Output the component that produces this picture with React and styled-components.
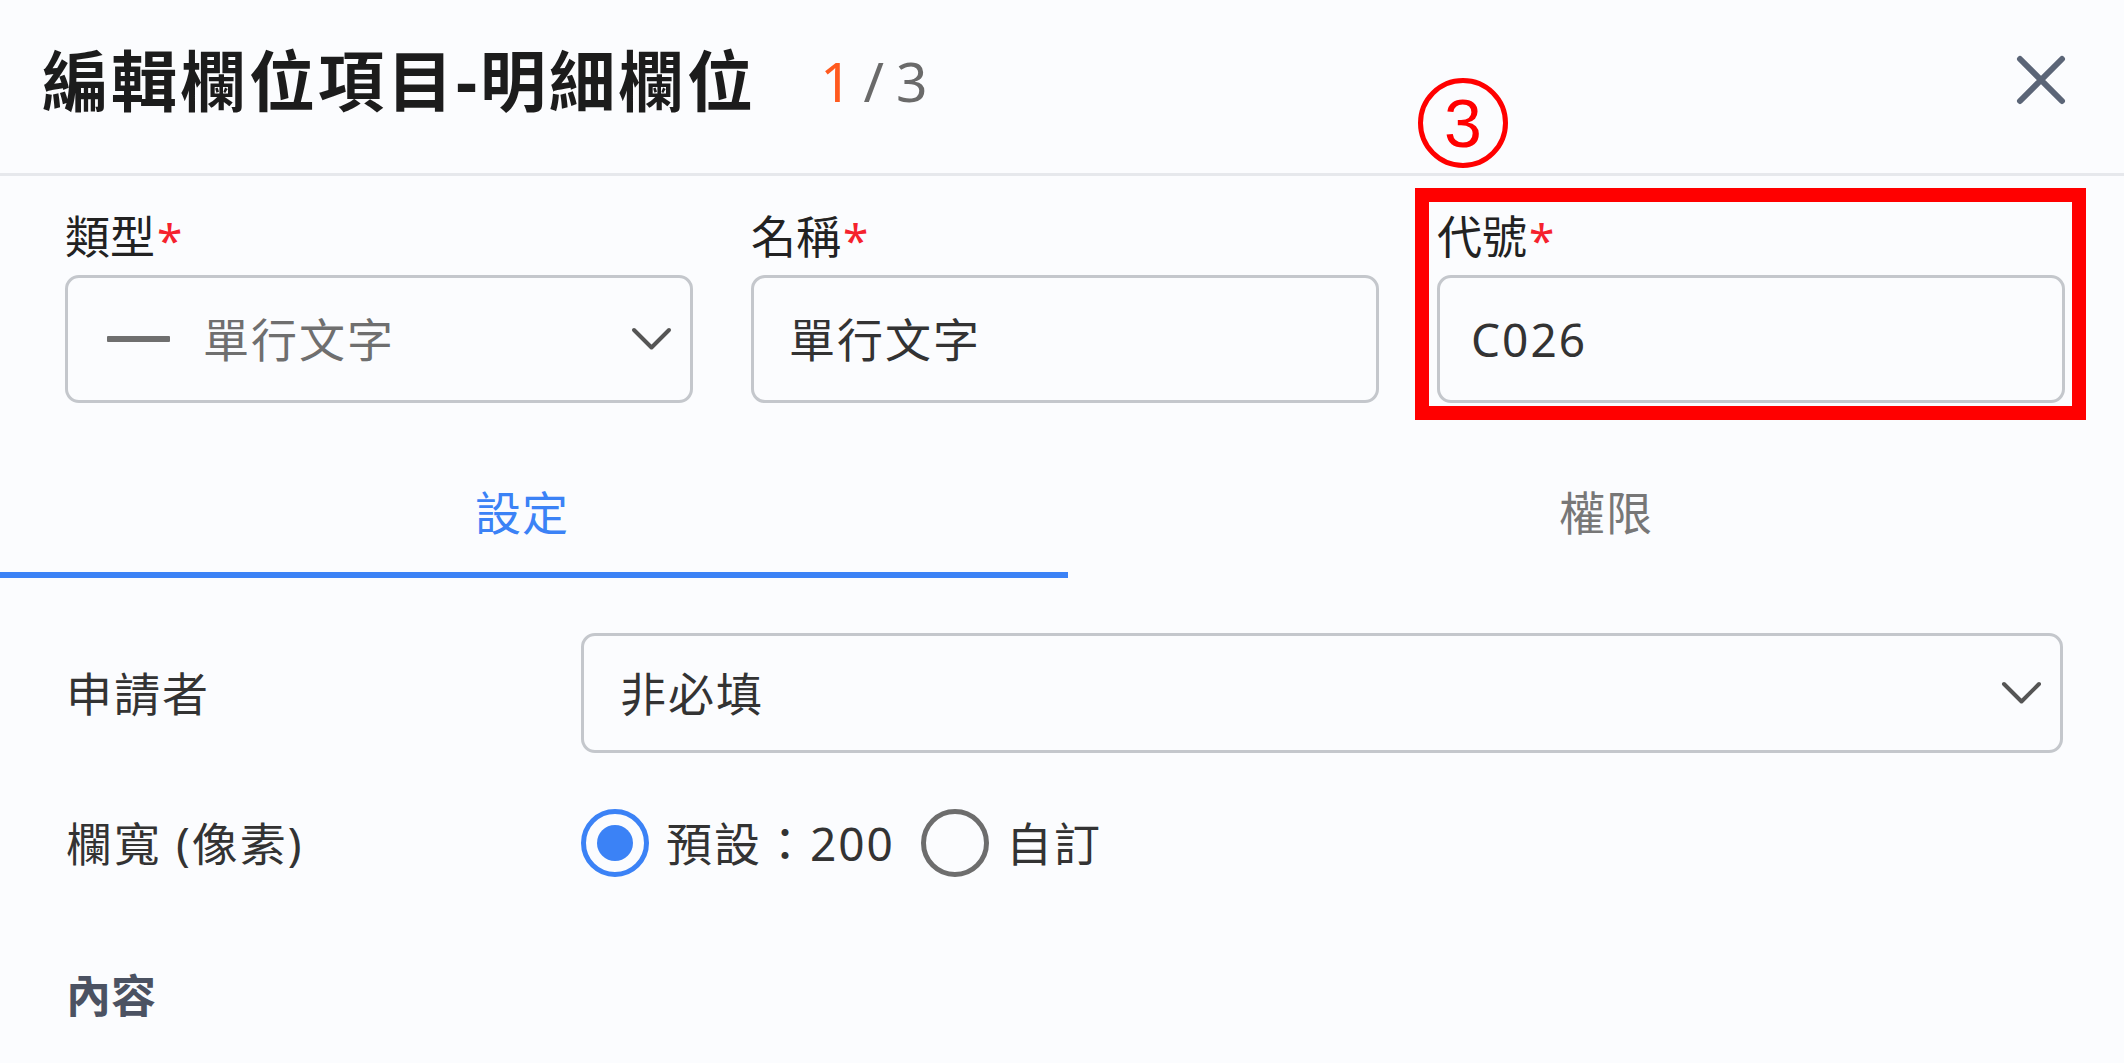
import React from 'react';
import styled, { createGlobalStyle } from 'styled-components';

const GlobalStyle = createGlobalStyle`
  html, body {
    margin: 0;
    padding: 0;
    background: #fbfcfe;
  }
  body {
    font-family: "Noto Sans", "Noto Sans CJK TC", sans-serif;
    color: #222;
  }
  * {
    box-sizing: border-box;
  }
`;

const Page = styled.div`
  width: 100%;
  min-height: 100vh;
  background: #fbfcfe;
`;

const Header = styled.header`
  display: flex;
  align-items: center;
  height: 176px;
  padding: 0 58px 13px 42px;
  border-bottom: 3px solid #e6e8ec;
`;

const Title = styled.h1`
  margin: 0;
  font-size: 66px;
  font-weight: 700;
  line-height: 1;
  letter-spacing: 3px;
  color: #1c1c1c;
`;

const Pager = styled.div`
  margin-left: 64px;
  font-size: 55px;
  line-height: 1;
  letter-spacing: 12px;
  color: #6a6a6a;
`;

const Current = styled.span`
  color: #ff5a1f;
`;

const CloseButton = styled.button`
  display: flex;
  margin-left: auto;
  padding: 0;
  border: 0;
  background: none;
  cursor: pointer;
`;

const Fields = styled.div`
  display: grid;
  grid-template-columns: repeat(3, 1fr);
  column-gap: 58px;
  padding: 34px 59px 0 65px;
`;

const Field = styled.div`
  position: relative;
  display: flex;
  flex-direction: column;
  gap: 11px;
`;

const Label = styled.div`
  font-size: 45px;
  line-height: 54px;
  color: #222;
`;

const Required = styled.span`
  position: relative;
  top: 4px;
  margin-left: 2px;
  font-size: 46px;
  line-height: 0;
  color: #f5222d;
`;

const Box = styled.div`
  display: flex;
  align-items: center;
  height: ${p => p.$height}px;
  padding: 0 18px 0 ${p => p.$padLeft}px;
  border: 3px solid #c4c7cc;
  border-radius: 14px;
  background: #fbfcfe;
  font-size: 46px;
  line-height: 54px;
  letter-spacing: 2px;
  color: ${p => (p.$muted ? '#6f6f6f' : '#333')};
`;

const TypeDash = styled.span`
  width: 63px;
  height: 6px;
  margin-right: 33px;
  border-radius: 1px;
  background: #6f6f6f;
`;

const Chevron = styled.svg`
  margin-left: auto;
  flex-shrink: 0;
`;

const Highlight = styled.div`
  position: absolute;
  top: -22px;
  left: -22px;
  right: -21px;
  bottom: -17px;
  border: 14px solid #ff0000;
  pointer-events: none;
`;

const Marker = styled.div`
  position: absolute;
  left: -19px;
  top: -132px;
  width: 90px;
  height: 90px;
  display: flex;
  align-items: center;
  justify-content: center;
  border: 5px solid #ff0000;
  border-radius: 50%;
  font-family: "Liberation Sans", sans-serif;
  font-size: 68px;
  line-height: 1;
  color: #ff0000;
`;

const Tabs = styled.div`
  display: flex;
  margin-top: 49px;
`;

const Tab = styled.div`
  flex: ${p => p.$grow || 1};
  padding: 33px ${p => p.$padRight || 0}px 33px ${p => p.$padLeft || 0}px;
  text-align: center;
  font-size: 46px;
  line-height: 54px;
  letter-spacing: 1px;
  color: ${p => (p.$active ? '#3b82f6' : '#777')};
  border-bottom: 6px solid ${p => (p.$active ? '#3b82f6' : 'transparent')};
`;

const Settings = styled.div`
  display: flex;
  flex-direction: column;
  gap: 56px;
  padding: 55px 61px 0 66px;
`;

const Row = styled.div`
  display: grid;
  grid-template-columns: 515px 1fr;
  align-items: center;
`;

const RowLabel = styled.div`
  font-size: 46px;
  line-height: 54px;
  letter-spacing: 2px;
  color: #333;
`;

const RadioGroup = styled.div`
  display: flex;
  align-items: center;
  height: 68px;
`;

const Radio = styled.span`
  display: flex;
  align-items: center;
  justify-content: center;
  flex-shrink: 0;
  width: 68px;
  height: 68px;
  border: 5px solid ${p => (p.$checked ? '#3b82f6' : '#6d6d6d')};
  border-radius: 50%;

  &::after {
    content: '';
    display: ${p => (p.$checked ? 'block' : 'none')};
    width: 36px;
    height: 36px;
    border-radius: 50%;
    background: #3b82f6;
  }
`;

const RadioText = styled.span`
  margin: 0 26px 0 17px;
  font-size: 46px;
  line-height: 54px;
  letter-spacing: 2px;
  color: #333;
`;

const SectionTitle = styled.div`
  margin-top: 36px;
  font-size: 45px;
  line-height: 54px;
  font-weight: 700;
  color: #4b5262;
`;

const ChevronIcon = () => (
  <Chevron width="41" height="24" viewBox="0 0 41 24">
    <path d="M3 3 L20.5 20.5 L38 3" fill="none" stroke="#555" strokeWidth="4" strokeLinecap="round" strokeLinejoin="round" />
  </Chevron>
);

const App = () => (
  <Page>
    <GlobalStyle />
    <Header>
      <Title>編輯欄位項目-明細欄位</Title>
      <Pager>
        <Current>1</Current>/3
      </Pager>
      <CloseButton aria-label="close">
        <svg width="50" height="50" viewBox="0 0 50 50">
          <path d="M4 4 L46 46 M46 4 L4 46" stroke="#5b6577" strokeWidth="6" strokeLinecap="round" />
        </svg>
      </CloseButton>
    </Header>

    <Fields>
      <Field>
        <Label>類型<Required>*</Required></Label>
        <Box $height={128} $padLeft={39} $muted>
          <TypeDash />
          單行文字
          <ChevronIcon />
        </Box>
      </Field>
      <Field>
        <Label>名稱<Required>*</Required></Label>
        <Box $height={128} $padLeft={35}>單行文字</Box>
      </Field>
      <Field>
        <Marker>3</Marker>
        <Label>代號<Required>*</Required></Label>
        <Box $height={128} $padLeft={31}>C026</Box>
        <Highlight />
      </Field>
    </Fields>

    <Tabs>
      <Tab $active $grow={1066} $padRight={24}>設定</Tab>
      <Tab $grow={1058} $padLeft={20}>權限</Tab>
    </Tabs>

    <Settings>
      <Row>
        <RowLabel>申請者</RowLabel>
        <Box $height={120} $padLeft={36}>
          非必填
          <ChevronIcon />
        </Box>
      </Row>
      <Row>
        <RowLabel>欄寬 (像素)</RowLabel>
        <RadioGroup>
          <Radio $checked />
          <RadioText>預設：200</RadioText>
          <Radio />
          <RadioText>自訂</RadioText>
        </RadioGroup>
      </Row>
      <SectionTitle>內容</SectionTitle>
    </Settings>
  </Page>
);

export default App;
